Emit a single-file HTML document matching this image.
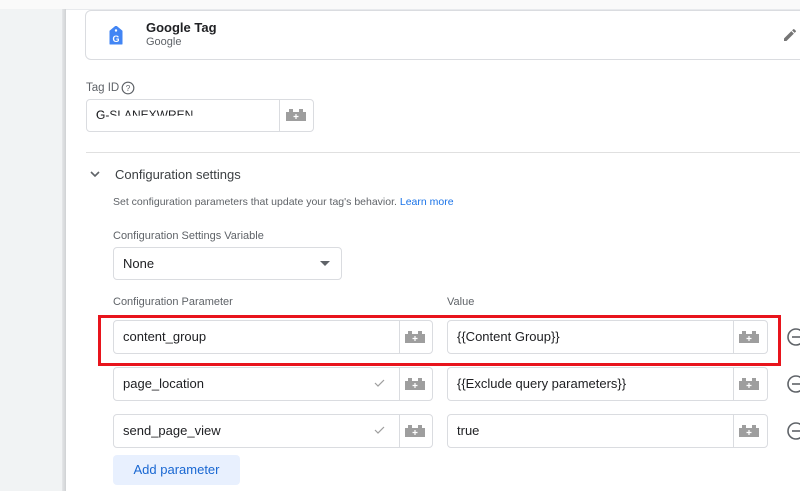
<!DOCTYPE html><html><head><style>
body{margin:0;width:800px;height:491px;overflow:hidden;background:#fff;font-family:"Liberation Sans",sans-serif;position:relative}
.a{position:absolute}
.inp{position:absolute;border:1px solid #dadce0;border-radius:4px;background:#fff;box-sizing:border-box}
.t{position:absolute;font-size:13px;color:#202124}
.dv{position:absolute;top:0;bottom:0;border-left:1px solid #dadce0}
.lbl{position:absolute;font-size:11px;color:#5f6368}
</style></head><body>
<div class="a" style="left:0;top:0;width:800px;height:9px;background:#fafafa"></div>
<div class="a" style="left:0;top:9px;width:62px;height:482px;background:#f1f3f4"></div>
<div class="a" style="left:62px;top:9px;width:4px;height:482px;background:linear-gradient(90deg,#e4e6e8,#d0d2d4)"></div>
<div class="a" style="left:66px;top:9px;width:734px;height:1px;background:#e8eaed"></div>
<div class="inp" style="left:85px;top:10px;width:730px;height:50px;border-radius:6px"></div>
<svg class="a" style="left:109px;top:26px" width="14" height="19" viewBox="0 0 14 19"><path d="M7 0L13 5V18H1V5Z" fill="#4285f4" stroke="#4285f4" stroke-linejoin="round"/><circle cx="7" cy="4.5" r="1.2" fill="#fff"/><text x="7" y="16" font-size="9" font-weight="bold" fill="#fff" text-anchor="middle" font-family="Liberation Sans">G</text></svg>
<div class="t" style="left:146px;top:20px;font-size:13px;font-weight:bold">Google Tag</div>
<div class="t" style="left:146px;top:36px;font-size:11px;color:#5f6368">Google</div>
<svg class="a" style="left:782px;top:27px" width="16" height="16" viewBox="0 0 24 24"><path d="M3 17.25V21h3.75L17.81 9.94l-3.75-3.75L3 17.25zM20.71 7.04a1 1 0 000-1.41l-2.34-2.34a1 1 0 00-1.41 0l-1.83 1.83 3.75 3.75 1.83-1.83z" fill="#757575"/></svg>
<div class="lbl" style="left:86px;top:82px;font-size:11.5px">Tag ID</div>
<svg class="a" style="left:121px;top:81px" width="14" height="14" viewBox="0 0 24 24"><circle cx="12" cy="12" r="10" fill="none" stroke="#5f6368" stroke-width="2"/><text x="12" y="17" font-size="14" text-anchor="middle" fill="#5f6368" font-family="Liberation Sans">?</text></svg>
<div class="inp" style="left:86px;top:99px;width:228px;height:33px"><div class="dv" style="left:192px"></div></div>
<div class="t" style="left:96px;top:108px;font-size:12px;clip-path:inset(0 0 45% 0)">G-SLANEXWREN</div>
<div class="t" style="left:96px;top:108px;font-size:12px">G-</div>
<div class="a" style="left:86px;top:152px;width:714px;height:1px;background:#e0e0e0"></div>
<svg class="a" style="left:90px;top:170px" width="10" height="8" viewBox="0 0 10 8"><path d="M1 2l4 4 4-4" fill="none" stroke="#5f6368" stroke-width="1.6"/></svg>
<div class="t" style="left:115px;top:167px;font-size:13px;color:#3c4043">Configuration settings</div>
<div class="lbl" style="left:113px;top:196px;font-size:10.5px;color:#5f6368">Set configuration parameters that update your tag's behavior. <span style="color:#1a73e8">Learn more</span></div>
<div class="lbl" style="left:113px;top:230px">Configuration Settings Variable</div>
<div class="inp" style="left:113px;top:247px;width:229px;height:33px"></div>
<div class="t" style="left:123px;top:256px">None</div>
<div class="a" style="left:320px;top:261px;width:0;height:0;border-left:5px solid transparent;border-right:5px solid transparent;border-top:5px solid #5f6368"></div>
<div class="lbl" style="left:113px;top:296px">Configuration Parameter</div>
<div class="lbl" style="left:447px;top:296px">Value</div>

<div class="inp" style="left:113px;top:320px;width:320px;height:34px"><div class="dv" style="left:285px"></div></div>
<div class="inp" style="left:447px;top:320px;width:321px;height:34px"><div class="dv" style="left:285px"></div></div>
<div class="t" style="left:123px;top:329px">content_group</div>
<div class="t" style="left:457px;top:329px">{{Content Group}}</div>
<div class="inp" style="left:113px;top:367px;width:320px;height:34px"><div class="dv" style="left:285px"></div></div>
<div class="inp" style="left:447px;top:367px;width:321px;height:34px"><div class="dv" style="left:285px"></div></div>
<div class="t" style="left:123px;top:376px">page_location</div>
<div class="t" style="left:457px;top:376px">{{Exclude query parameters}}</div>
<div class="inp" style="left:113px;top:414px;width:320px;height:34px"><div class="dv" style="left:285px"></div></div>
<div class="inp" style="left:447px;top:414px;width:321px;height:34px"><div class="dv" style="left:285px"></div></div>
<div class="t" style="left:123px;top:423px">send_page_view</div>
<div class="t" style="left:457px;top:423px">true</div>

<svg class="a" style="left:0;top:0" width="800" height="491">
<defs><g id="b"><path d="M0 3h3V0h4v3h6V0h4v3h3v9H0z" fill="#9e9e9e"/><path d="M10 5v5M7.5 7.5h5" stroke="#fff" stroke-width="1.2"/></g>
<g id="m"><circle cx="10" cy="10" r="8" fill="none" stroke="#5f6368" stroke-width="1.6"/><path d="M6 10h8" stroke="#5f6368" stroke-width="1.6"/></g>
<path id="c" d="M0 4l3 3 6-6" fill="none" stroke="#9e9e9e" stroke-width="1.2"/></defs>
<use href="#b" x="286" y="109"/>
<use href="#b" x="405" y="331"/><use href="#b" x="739" y="331"/>
<use href="#b" x="405" y="378"/><use href="#b" x="739" y="378"/>
<use href="#b" x="405" y="425"/><use href="#b" x="739" y="425"/>
<use href="#c" x="375" y="379"/><use href="#c" x="375" y="426"/>
<use href="#m" x="786" y="327"/><use href="#m" x="786" y="374"/><use href="#m" x="786" y="421"/>
<rect x="99.5" y="316.5" width="680" height="48" fill="none" stroke="#e8141c" stroke-width="3"/>
</svg>
<div class="a" style="left:113px;top:455px;width:127px;height:30px;background:#e8f0fe;border-radius:4px;color:#1967d2;font-size:13px;line-height:30px;text-align:center">Add parameter</div>
</body></html>
